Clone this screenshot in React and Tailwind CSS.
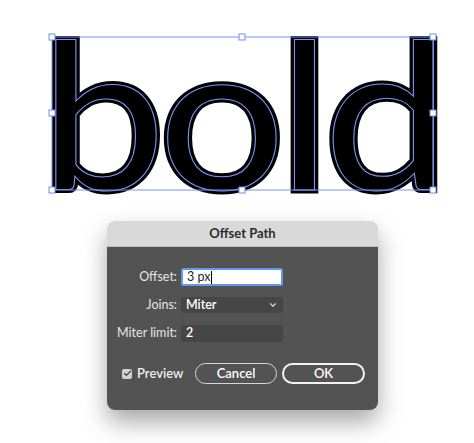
import { ChevronDown, Check } from "lucide-react";

// Handle on the selection box
function Handle({ x, y }) {
  return <rect x={x - 3} y={y - 3} width="6" height="6" fill="#fff" stroke="#6f8ff0" strokeWidth="1" />;
}

function BoldArtwork() {
  const text = {
    x: 0,
    y: 0,
    fontFamily: "Lato, 'DejaVu Sans', sans-serif",
    fontSize: 204,
    textLength: 372,
    lengthAdjust: "spacing",
  };
  return (
    <svg width="474" height="205" viewBox="0 0 474 205" className="block">
      <g transform="translate(40 190) scale(1.1 1)">
        <text {...text} fill="#000" stroke="#000" strokeWidth="7" strokeLinejoin="miter">
          bold
        </text>
        <text {...text} fill="none" stroke="#7a93f2" strokeWidth="1">
          bold
        </text>
      </g>
      <rect x="52" y="37" width="381" height="153" fill="none" stroke="#7a93f2" strokeWidth="1" />
      <Handle x={52} y={37} />
      <Handle x={242} y={37} />
      <Handle x={433} y={37} />
      <Handle x={52} y={113} />
      <Handle x={433} y={113} />
      <Handle x={52} y={190} />
      <Handle x={242} y={190} />
      <Handle x={433} y={190} />
    </svg>
  );
}

export default function App() {
  return (
    <div className="w-[474px] h-[443px] bg-white overflow-hidden font-['Lato',sans-serif]">
      <BoldArtwork />

      {/* Offset Path dialog */}
      <div className="ml-[107px] mt-[16px] w-[271px] rounded-[8px] overflow-hidden shadow-[0_12px_24px_rgba(0,0,0,0.35)]">
        <div className="h-[26px] bg-[#d9d9d9] flex items-center justify-center text-[13px] font-bold text-[#2b2b2b] border-b border-[#bdbdbd]">
          Offset Path
        </div>
        <div className="bg-[#535353] h-[163px] pt-[21px] text-[12.5px] leading-none text-[#e6e6e6]">
          <div className="flex items-center h-[18px]">
            <span className="w-[70px] text-right">Offset:</span>
            <div className="ml-[4px] w-[102px] h-[18px] bg-white border-2 border-[#5d9be8] rounded-[2px] flex items-center pl-[4px] text-[#1f1f1f]">
              3 px<span className="w-px h-[13px] bg-black ml-px" />
            </div>
          </div>
          <div className="flex items-center h-[16px] mt-[11px]">
            <span className="w-[70px] text-right">Joins:</span>
            <div className="ml-[4px] w-[102px] h-[16px] bg-[#464646] rounded-[2px] flex items-center justify-between pl-[5px] pr-[5px] text-white font-semibold">
              Miter
              <ChevronDown size={10} strokeWidth={3} className="text-[#cfcfcf]" />
            </div>
          </div>
          <div className="flex items-center h-[17px] mt-[12px]">
            <span className="w-[70px] text-right">Miter limit:</span>
            <div className="ml-[4px] w-[102px] h-[17px] bg-[#464646] rounded-[2px] flex items-center pl-[5px] text-white font-semibold">
              2
            </div>
          </div>
          <div className="flex items-center h-[21px] mt-[21px] pl-[15px]">
            <div className="w-[73px] flex items-center">
              <div className="w-[10px] h-[10px] bg-[#d0d0d0] rounded-[2px] flex items-center justify-center">
                <Check size={9} strokeWidth={3.5} className="text-[#444]" />
              </div>
              <span className="ml-[5px] font-semibold text-[#ececec] text-[13px]">Preview</span>
            </div>
            <div className="w-[82px] h-[21px] rounded-full border border-[#d8d8d8] flex items-center justify-center font-semibold text-white text-[13px]">
              Cancel
            </div>
            <div className="ml-[5px] w-[83px] h-[21px] rounded-full border-2 border-[#f2f2f2] flex items-center justify-center font-semibold text-white text-[13px]">
              OK
            </div>
          </div>
        </div>
      </div>
    </div>
  );
}
